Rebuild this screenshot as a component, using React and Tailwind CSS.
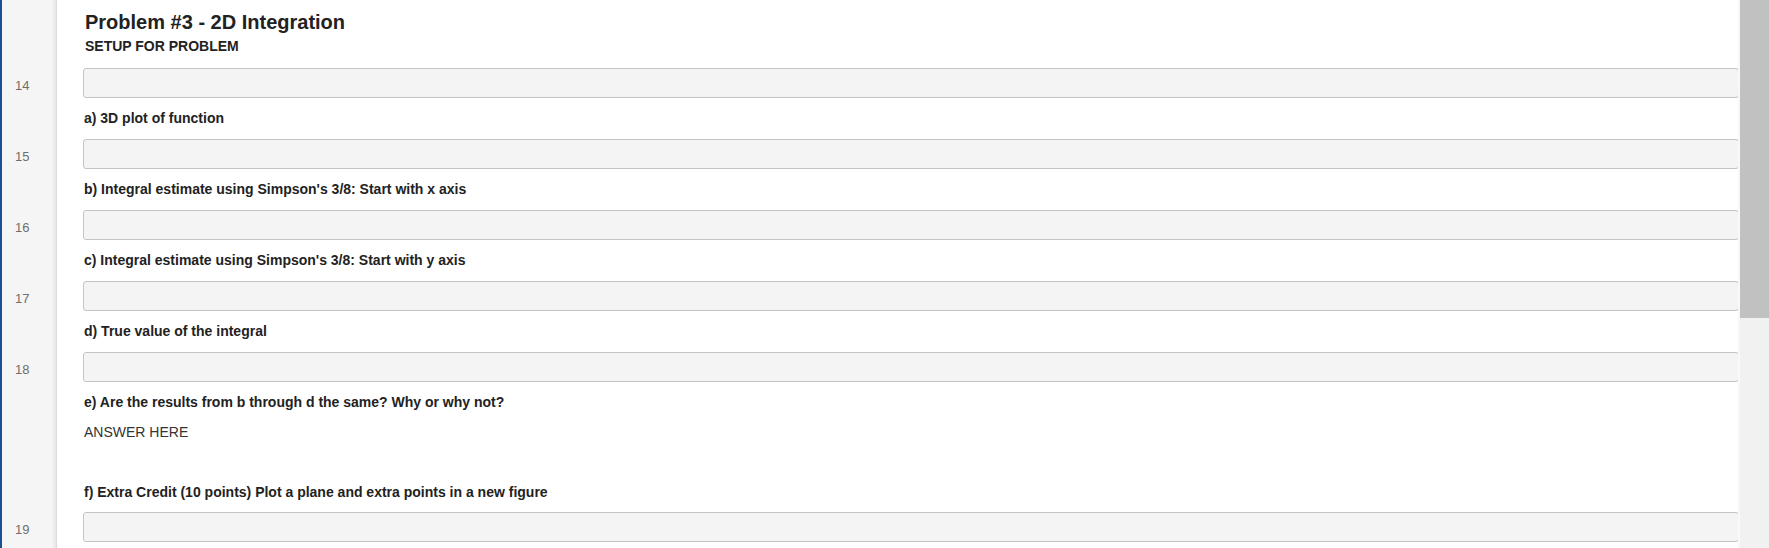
import React from "react";

const font = { fontFamily: '"Liberation Sans", Arial, sans-serif' };

function Gutter({ num }) {
  return (
    <div className="w-[57px] shrink-0 self-stretch border-l-2 border-[#1b4f93] bg-[linear-gradient(to_right,#f5f5f5_calc(100%-4px),#e6e6e6)] border-r border-r-[#dcdcdc] flex items-center pl-[13px] text-[13px] text-[#6f6f6a]">
      {num ? <span className="pt-[5px]">{num}</span> : null}
    </div>
  );
}

function CodeRow({ num }) {
  return (
    <div className="flex h-[30px]">
      <Gutter num={num} />
      <div className="flex-1 pl-[26px] min-w-0">
        <div className="h-[30px] -mr-[1px] rounded-[3px] border border-[#c4c4c4] bg-[#f4f4f4]" />
      </div>
    </div>
  );
}

function Label({ children }) {
  return (
    <div className="text-[14px] font-bold leading-[16px] text-[#222]">{children}</div>
  );
}

function TextRow({ children, className }) {
  return (
    <div className={"flex " + className}>
      <Gutter />
      <div className="flex-1 pl-[27px] min-w-0">{children}</div>
    </div>
  );
}

const cells = [
  { num: 14, label: "a) 3D plot of function" },
  { num: 15, label: "b) Integral estimate using Simpson's 3/8: Start with x axis" },
  { num: 16, label: "c) Integral estimate using Simpson's 3/8: Start with y axis" },
  { num: 17, label: "d) True value of the integral" },
];

export default function App() {
  return (
    <div className="flex h-[548px] w-full overflow-hidden bg-white" style={font}>
      <div className="flex-1 min-w-0 flex flex-col">
        <TextRow className="h-[68px]">
          <div className="pt-[8px] pl-[1px]">
            <h1 className="text-[20px] font-bold leading-[28px] text-[#222]">
              Problem #3 - 2D Integration
            </h1>
            <div className="mt-[1px] text-[14px] font-bold leading-[18px] text-[#222]">
              SETUP FOR PROBLEM
            </div>
          </div>
        </TextRow>

        {cells.map((c) => (
          <React.Fragment key={c.num}>
            <CodeRow num={c.num} />
            <TextRow className="h-[41px]">
              <div className="pt-[12px]">
                <Label>{c.label}</Label>
              </div>
            </TextRow>
          </React.Fragment>
        ))}

        <CodeRow num={18} />
        <TextRow className="h-[130px]">
          <div className="pt-[12px]">
            <Label>e) Are the results from b through d the same? Why or why not?</Label>
            <div className="mt-[14px] text-[14px] leading-[17px] text-[#333]">ANSWER HERE</div>
            <div className="mt-[43px]">
              <Label>f) Extra Credit (10 points) Plot a plane and extra points in a new figure</Label>
            </div>
          </div>
        </TextRow>
        <CodeRow num={19} />
        <TextRow className="flex-1" />
      </div>

      <div className="w-[31px] shrink-0 flex bg-[#f1f1f1]">
        <div className="w-[2px] bg-[#f8f8f8]" />
        <div className="flex-1">
          <div className="h-[318px] w-full bg-[#c1c1c1]" />
        </div>
      </div>
    </div>
  );
}
